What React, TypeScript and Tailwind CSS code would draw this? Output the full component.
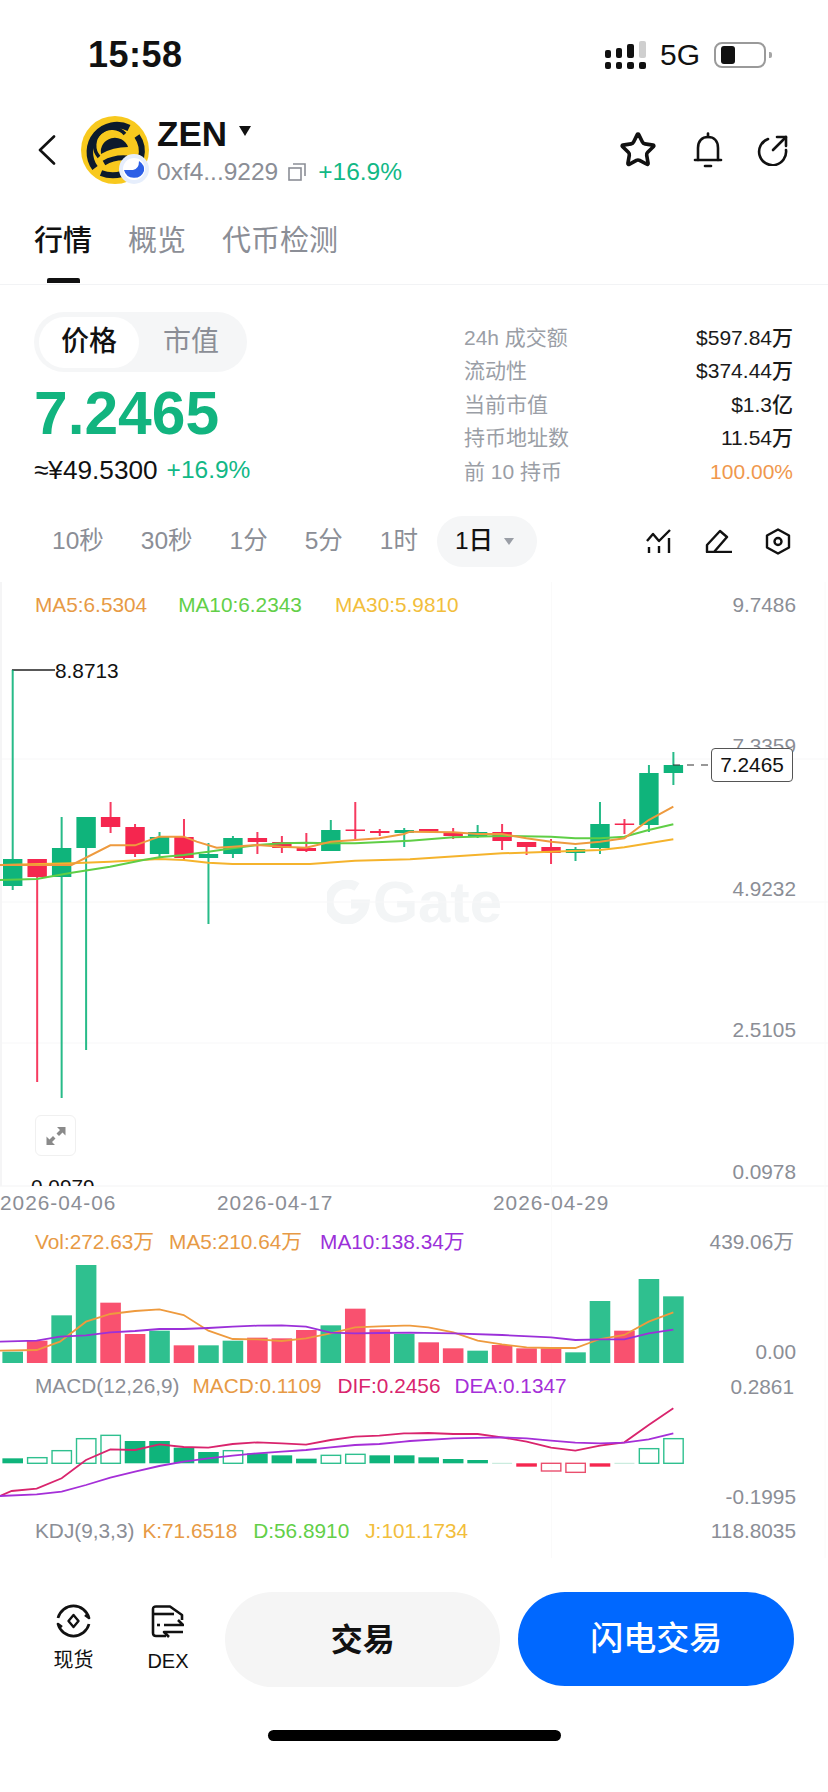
import { Star } from 'lucide-react';

type P = [number, number];

const GREEN = '#0fb47b';
const RED = '#f5264f';

// points read off the 3x crops, left half and right half of the chart
const pts = (oy: number, left: P[], right: P[]) =>
  [
    ...left.map(([u, v]) => `${u / 3},${oy + v / 3}`),
    ...right.map(([u, v]) => `${410 + u / 3},${oy + v / 3}`),
  ].join(' ');

const cx = (i: number) => 12.7 + 24.47 * i;

// high, body top, body bottom, low, up
const candles: [number, number, number, number, boolean][] = [
  [670, 859, 886, 890, true],
  [859, 859, 877, 1082, false],
  [817, 848, 877, 1098, true],
  [817, 817, 848, 1050, true],
  [802, 817, 827, 833, false],
  [824, 827, 854, 857, false],
  [832, 837, 854, 858, true],
  [819, 837, 858, 861, false],
  [843, 854, 858, 924, true],
  [836, 838, 854, 858, true],
  [832, 838, 842, 854, false],
  [836, 842, 848, 853, false],
  [833, 848, 851, 852, false],
  [820, 830, 851, 851, true],
  [802, 829.5, 831, 840, false],
  [829, 831, 833, 836, false],
  [828, 830, 833, 847, true],
  [829, 829, 832, 832, false],
  [828, 832, 836, 839, false],
  [825, 832, 836, 838, true],
  [824, 832, 841, 850, false],
  [842, 842, 847, 855, false],
  [839, 847, 853, 864, false],
  [847, 849, 853, 861, true],
  [802, 824, 848, 854, true],
  [819, 823.5, 825, 834, false],
  [765, 773, 825, 832, true],
  [752, 765, 773, 785, true],
];

const ma5 = pts(580, [[0, 855], [150, 855], [215, 855], [331, 796], [405, 796], [478, 770], [551, 770], [590, 785], [650, 803], [698, 800], [772, 795], [845, 800], [918, 803], [992, 785], [1065, 780], [1138, 775], [1212, 762]], [[0, 755], [130, 757], [202, 762], [276, 762], [349, 775], [423, 785], [496, 792], [570, 785], [643, 775], [716, 720], [790, 680]]);
const ma10 = pts(580, [[0, 900], [110, 897], [215, 878], [330, 860], [430, 840], [478, 832], [551, 825], [625, 815], [698, 805], [772, 795], [845, 790], [918, 788], [992, 790], [1065, 790], [1212, 783]], [[0, 782], [130, 772], [276, 768], [423, 770], [496, 775], [570, 775], [643, 770], [716, 750], [790, 733]]);
const ma30 = pts(580, [[0, 855], [215, 850], [330, 845], [478, 837], [551, 840], [625, 848], [698, 852], [930, 852], [1065, 842]], [[0, 838], [276, 820], [423, 815], [570, 810], [643, 802], [790, 778]]);

// volume bar tops, in crop units
const vols: [number, boolean][] = [
  [425, true], [392, false], [316, true], [165, true], [278, false], [372, false], [362, true],
  [406, false], [406, true], [392, true], [383, false], [385, false], [360, false], [346, true],
  [296, false], [358, false], [372, true], [397, false], [415, false], [422, true], [405, false],
  [415, false], [415, false], [427, true], [273, true], [362, false], [207, true], [259, true],
];
const volMa5 = pts(1210, [[0, 422], [110, 420], [180, 395], [258, 335], [331, 312], [405, 303], [478, 298], [551, 315], [625, 362], [698, 387], [772, 388], [845, 393], [918, 385], [992, 370], [1065, 352], [1138, 349], [1212, 347]], [[0, 347], [55, 352], [130, 367], [203, 392], [276, 403], [350, 412], [423, 414], [496, 414], [570, 387], [643, 375], [716, 335], [790, 307]]);
const volMa10 = pts(1210, [[0, 395], [110, 392], [180, 380], [258, 376], [331, 367], [405, 363], [478, 357], [551, 357], [625, 354], [698, 350], [772, 347], [845, 346], [918, 350], [992, 368], [1065, 370], [1138, 369]], [[0, 368], [130, 370], [276, 375], [423, 382], [496, 390], [570, 388], [643, 388], [716, 370], [790, 359]]);

// macd histogram: edge in crop units, f filled, o outlined, l hairline
const macd: [number, 'f' | 'o' | 'l'][] = [
  [745, 'f'], [743, 'o'], [722, 'o'], [686, 'o'], [676, 'o'], [693, 'f'], [693, 'f'], [713, 'f'],
  [726, 'f'], [722, 'o'], [730, 'f'], [736, 'f'], [746, 'f'], [736, 'o'], [733, 'o'], [736, 'f'],
  [736, 'f'], [742, 'f'], [747, 'f'], [750, 'f'], [760, 'l'], [770, 'f'], [783, 'o'], [787, 'o'],
  [770, 'f'], [760, 'l'], [716, 'o'], [686, 'o'],
];
const dif = pts(1210, [[0, 858], [35, 843], [110, 836], [185, 805], [258, 750], [331, 718], [405, 720], [478, 703], [551, 711], [625, 713], [698, 702], [772, 697], [845, 700], [918, 704], [992, 690], [1065, 680], [1138, 677], [1212, 670]], [[0, 670], [55, 669], [130, 672], [203, 672], [276, 682], [350, 695], [423, 713], [496, 722], [570, 707], [643, 697], [716, 645], [790, 595]]);
const dea = pts(1210, [[0, 858], [110, 853], [185, 845], [258, 825], [331, 803], [405, 785], [478, 768], [551, 755], [625, 745], [698, 737], [772, 730], [845, 725], [918, 720], [992, 712], [1065, 705], [1138, 702], [1212, 695]], [[0, 693], [130, 685], [276, 682], [350, 685], [423, 692], [496, 698], [570, 700], [643, 698], [716, 688], [790, 670]]);

const ChartDrawing = () => (
  <svg className="absolute inset-0" width="828" height="976" viewBox="0 582 828 976" fill="none">
    {[759, 902, 1043].map((y) => (
      <line key={y} x1="0" x2="828" y1={y} y2={y} stroke="#f7f7f8" strokeWidth="1" />
    ))}
    <line x1="0" x2="828" y1="1186" y2="1186" stroke="#f3f3f4" />
    <line x1="551.5" x2="551.5" y1="582" y2="1558" stroke="#fafafa" />
    <line x1="1" x2="1" y1="582" y2="1186" stroke="#f5f5f6" strokeWidth="2" />
    <line x1="825" x2="825" y1="582" y2="1558" stroke="#fafafa" />

    <polyline points="12.7,671 12.7,670 55,670" stroke="#222" strokeWidth="1.5" />
    {candles.map(([high, top, bottom, low, up], i) => (
      <g key={i} fill={up ? GREEN : RED}>
        <rect x={cx(i) - 1} y={high} width="2" height={low - high} opacity="0.9" />
        <rect x={cx(i) - 9.7} y={top} width="19.4" height={bottom - top} />
      </g>
    ))}
    <polyline points={ma30} stroke="#f5b32c" strokeWidth="2" />
    <polyline points={ma10} stroke="#5fce46" strokeWidth="2" />
    <polyline points={ma5} stroke="#ee9a3e" strokeWidth="2" />
    <line x1="673" x2="708" y1="765" y2="765" stroke="#333" strokeWidth="1.2" strokeDasharray="7 7" />

    {vols.map(([top, up], i) => (
      <rect key={i} x={cx(i) - 10.3} y={1210 + top / 3} width="20.6" height={1363 - (1210 + top / 3)} fill={up ? '#2fc08f' : '#f9516f'} />
    ))}
    <polyline points={volMa5} stroke="#ee9a3e" strokeWidth="1.8" />
    <polyline points={volMa10} stroke="#9b30d9" strokeWidth="1.8" />

    {macd.map(([edge, mode], i) => {
      const y = 1210 + edge / 3;
      const zero = 1463.3;
      const up = y <= zero;
      const top = Math.min(y, zero);
      const h = Math.abs(y - zero);
      const color = up ? '#2fc08f' : '#ea4f6e';
      if (mode === 'l') {
        return <line key={i} x1={cx(i) - 10} x2={cx(i) + 10} y1={zero} y2={zero} stroke="#bfe8d8" />;
      }
      if (mode === 'o') {
        return <rect key={i} x={cx(i) - 9.6} y={top} width="19.4" height={h} stroke={color} strokeWidth="1.4" fill="none" />;
      }
      return <rect key={i} x={cx(i) - 10.3} y={top} width="20.6" height={h} fill={up ? GREEN : RED} />;
    })}
    <polyline points={dif} stroke="#d9246d" strokeWidth="1.8" />
    <polyline points={dea} stroke="#a52fd8" strokeWidth="1.8" />
  </svg>
);

const ZenLogo = () => (
  <svg width="68" height="68" viewBox="0 0 68 68" fill="none" className="shrink-0">
    <circle cx="34" cy="34" r="34" fill="#f8c91e" />
    <path d="M48 12 A27 27 0 0 0 14 52" stroke="#0c1a2c" strokeWidth="6.5" />
    <path d="M56 20 A27 27 0 0 1 60 42" stroke="#0c1a2c" strokeWidth="6" />
    <path d="M20 57 Q30 61 41 58" stroke="#0c1a2c" strokeWidth="6" />
    <path d="M18 41 A16 16 0 0 1 44 18" stroke="#0c1a2c" strokeWidth="3.5" />
    <path d="M20 38 A14 14 0 0 1 47 31 Q32 31 20 38 Z" fill="#0c1a2c" />
    <path d="M23 47 Q33 41 46 42" stroke="#0c1a2c" strokeWidth="5" />
  </svg>
);

const ChainBadge = () => (
  <svg width="30" height="30" viewBox="0 0 30 30" className="absolute left-[38px] top-[38px]">
    <circle cx="15" cy="15" r="15" fill="#e6eefc" />
    <circle cx="15" cy="15" r="11" fill="#ffffff" />
    <path d="M5 16 H14 Q20 15 20 7 Q26 11 25 17 A10.5 10.5 0 0 1 5 16 Z" fill="#2c5fe6" />
  </svg>
);

const BellIcon = () => (
  <svg width="30" height="36" viewBox="0 0 30 36" fill="none" stroke="#111" strokeWidth="2.6" strokeLinecap="round" strokeLinejoin="round">
    <path d="M2 28 H28" />
    <path d="M5 28 V16 C5 9 9 5 15 5 C21 5 25 9 25 16 V28" />
    <path d="M15 1.5 V5" />
    <path d="M12 34 H18" />
  </svg>
);

const ShareIcon = () => (
  <svg width="31" height="31" viewBox="0 0 31 31" fill="none" stroke="#111" strokeWidth="2.6" strokeLinecap="round" strokeLinejoin="round">
    <path d="M11 4 A13.5 13.5 0 1 0 29 15" />
    <path d="M16 15 L29 2" />
    <path d="M20 2 H29 V11" />
  </svg>
);

const IndicatorIcon = () => (
  <svg width="26" height="24" viewBox="0 0 26 24" fill="none" stroke="#111" strokeWidth="2.4" strokeLinejoin="round">
    <polyline points="1,12 7,5 13,12 24,1" />
    <path d="M3 18 V24 M13 17 V24 M23 9 V24" />
  </svg>
);

const PenIcon = () => (
  <svg width="27" height="24" viewBox="0 0 27 24" fill="none" stroke="#111" strokeWidth="2.4" strokeLinejoin="round">
    <path d="M2 23 V16 L15 2 L22 8 L9 23 Z" />
    <path d="M9 23 H27" />
  </svg>
);

const HexIcon = () => (
  <svg width="26" height="27" viewBox="0 0 26 27" fill="none" stroke="#111" strokeWidth="2.4" strokeLinejoin="round">
    <path d="M13 1.5 L24 7.5 V19.5 L13 25.5 L2 19.5 V7.5 Z" />
    <circle cx="13" cy="13.5" r="3.5" />
  </svg>
);

const SpotIcon = () => (
  <svg width="37" height="36" viewBox="0 0 37 36" fill="none" stroke="#111" strokeWidth="2.7" strokeLinejoin="round">
    <path d="M3 15 A16 16 0 0 1 34 15 L30 12" />
    <path d="M34 21 A16 16 0 0 1 3 21 L7 24" />
    <path d="M18.5 12 L23.5 18 L18.5 24 L13.5 18 Z" strokeWidth="2.4" />
  </svg>
);

const DexIcon = () => (
  <svg width="33" height="34" viewBox="0 0 33 34" fill="none" stroke="#111" strokeWidth="2.6" strokeLinejoin="round">
    <path d="M15 31 H5 Q2 31 2 28 V4 Q2 1.5 5 1.5 H19 L31 10 V15" />
    <path d="M2 9 H23" />
    <path d="M13 20 H32 L27 15" />
    <path d="M32 27 H13 L18 32" />
    <path d="M6 20 H9" />
  </svg>
);

const ExpandIcon = () => (
  <svg width="20" height="20" viewBox="0 0 20 20" fill="#8a8a8a">
    <path d="M11 1 H19.5 V9.5 L16.5 6.5 L13 10 L10.5 7.5 L14 4 Z" />
    <path d="M9 19 H0.5 V10.5 L3.5 13.5 L7 10 L9.5 12.5 L6 16 Z" />
  </svg>
);

const stats = [
  ['24h 成交额', '$597.84万', 'text-[#1a1a1a]'],
  ['流动性', '$374.44万', 'text-[#1a1a1a]'],
  ['当前市值', '$1.3亿', 'text-[#1a1a1a]'],
  ['持币地址数', '11.54万', 'text-[#1a1a1a]'],
  ['前 10 持币', '100.00%', 'text-[#f0984d]'],
];

export default function App() {
  return (
    <div className="w-[828px] h-[1792px] overflow-hidden bg-white font-['Liberation_Sans','Noto_Sans_CJK_SC',sans-serif] text-[#111]">
      {/* status bar */}
      <div className="flex h-[110px] items-center pl-[88px] pr-[56px]">
        <span className="text-[36px] font-bold tracking-[0.5px]">15:58</span>
        <div className="ml-auto flex items-center">
          <svg width="41" height="28" viewBox="0 0 41 28" fill="#111">
            <rect x="0" y="9" width="6" height="8" rx="2" />
            <rect x="11" y="7" width="6" height="10" rx="2" />
            <rect x="22" y="3" width="7" height="14" rx="2" />
            <rect x="34" y="0" width="7" height="17" rx="2" fill="#cfcfcf" />
            <rect x="0" y="21" width="6" height="7" rx="2" />
            <rect x="11" y="21" width="6" height="7" rx="2" />
            <rect x="22" y="21" width="7" height="7" rx="2" />
            <rect x="34" y="21" width="7" height="7" rx="2" />
          </svg>
          <span className="ml-[14px] text-[30px] leading-none">5G</span>
          <div className="ml-[14px] flex h-[26px] w-[52px] items-center rounded-[8px] border-2 border-[#9a9a9a] pl-[5px]">
            <div className="h-[18px] w-[14px] rounded-[3px] bg-[#111]" />
          </div>
          <div className="ml-[3px] h-[6px] w-[3px] rounded-r-[2px] bg-[#a5a5a5]" />
        </div>
      </div>

      {/* token header */}
      <div className="flex h-[80px] items-center pl-[38px] pr-[40px]">
        <svg width="18" height="30" viewBox="0 0 18 30" fill="none" stroke="#111" strokeWidth="2.6" strokeLinecap="round" strokeLinejoin="round">
          <path d="M16 1.5 L2 15 L16 28.5" />
        </svg>
        <div className="relative ml-[25px] h-[68px] w-[68px]">
          <ZenLogo />
          <ChainBadge />
        </div>
        <div className="ml-[8px] flex flex-col">
          <div className="flex h-[36px] items-center">
            <span className="text-[35px] font-bold leading-[36px]">ZEN</span>
            <span className="ml-[12px] mt-[-5px] h-0 w-0 border-x-[6.5px] border-t-[10px] border-x-transparent border-t-[#111]" />
          </div>
          <div className="mt-[7px] flex items-center">
            <span className="text-[24.5px] leading-[26px] text-[#8b8e96]">0xf4...9229</span>
            <svg className="ml-[10px]" width="18" height="18" viewBox="0 0 18 18" fill="none" stroke="#8b8e96" strokeWidth="1.6">
              <rect x="1" y="5" width="12" height="12" />
              <path d="M5 1 H17 V13" />
            </svg>
            <span className="ml-[12px] text-[24.5px] font-medium leading-[26px] text-[#12b886]">+16.9%</span>
          </div>
        </div>
        <div className="ml-auto flex items-center gap-[34px]">
          <div className="mr-[2px]">
            <Star size={38} strokeWidth={2.3} color="#111" strokeLinejoin="miter" />
          </div>
          <BellIcon />
          <ShareIcon />
        </div>
      </div>

      {/* tabs */}
      <div className="flex h-[95px] gap-[36px] border-b border-[#f2f3f5] pl-[34px]">
        <div className="flex flex-col items-center pt-[34px]">
          <span className="text-[29px] font-medium leading-[34px]">行情</span>
          <div className="mt-[20px] h-[5px] w-[33px] rounded-t-[2px] bg-[#111]" />
        </div>
        <span className="pt-[34px] text-[29px] leading-[34px] text-[#8b8e96]">概览</span>
        <span className="pt-[34px] text-[29px] leading-[34px] text-[#8b8e96]">代币检测</span>
      </div>

      {/* price summary */}
      <div className="flex h-[220px] justify-between pl-[34px] pr-[35px] pt-[27px]">
        <div className="flex flex-col">
          <div className="flex h-[60px] w-[213px] items-center rounded-full bg-[#f5f6f7] pl-[5px]">
            <div className="flex h-[51px] w-[100px] items-center justify-center rounded-full bg-white text-[28px] font-medium">价格</div>
            <div className="ml-[24px] text-[28px] text-[#8b8e96]">市值</div>
          </div>
          <div className="mt-[8px] text-[60.5px] font-bold leading-[66px] text-[#12b47f]">7.2465</div>
          <div className="mt-[11px] flex items-center text-[26.2px] leading-[26px]">
            <span>≈¥49.5300</span>
            <span className="ml-[9px] text-[24.5px] text-[#12b886]">+16.9%</span>
          </div>
        </div>
        <div className="flex w-[329px] flex-col pt-[9px]">
          {stats.map(([label, value, color]) => (
            <div key={label} className="flex h-[33.4px] items-center justify-between">
              <span className="text-[21px] text-[#9a9ea6]">{label}</span>
              <span className={`text-[21px] font-medium ${color}`}>{value}</span>
            </div>
          ))}
        </div>
      </div>

      {/* timeframes */}
      <div className="mb-[5px] flex h-[72px] items-center pl-[52px] pr-[37px]">
        <div className="flex items-center gap-[37px] text-[24.5px] text-[#8b8e96]">
          <span>10秒</span>
          <span>30秒</span>
          <span>1分</span>
          <span>5分</span>
          <span>1时</span>
        </div>
        <div className="ml-[19px] flex h-[51px] w-[100px] items-center rounded-full bg-[#f5f6f7] pl-[18px]">
          <span className="text-[24.5px] font-medium">1日</span>
          <span className="ml-[11px] h-0 w-0 border-x-[5.5px] border-t-[7px] border-x-transparent border-t-[#9a9ea6]" />
        </div>
        <div className="ml-auto flex items-center gap-[33px]">
          <IndicatorIcon />
          <PenIcon />
          <HexIcon />
        </div>
      </div>

      {/* chart canvas */}
      <div className="relative h-[976px] w-[828px] overflow-hidden text-[20.8px] leading-[24px]">
        <div className="absolute left-[327px] top-[292px] flex items-center text-[#f3f5f6]">
          <svg width="44" height="44" viewBox="0 0 44 44" fill="none" stroke="#f3f5f6" strokeWidth="9">
            <path d="M30 7 A18 18 0 1 0 38 24 L24 24" />
          </svg>
          <span className="ml-[2px] text-[58px] font-bold leading-[56px]">Gate</span>
        </div>

        <ChartDrawing />

        <div className="absolute left-[35px] top-[11px] flex">
          <span className="text-[#e79a45]">MA5:6.5304</span>
          <span className="ml-[31px] text-[#62cf48]">MA10:6.2343</span>
          <span className="ml-[33px] text-[#f2be3c]">MA30:5.9810</span>
        </div>
        <div className="absolute left-[55px] top-[77px] text-[#111]">8.8713</div>

        <div className="absolute right-[32px] top-[11px] text-[#8b8e96]">9.7486</div>
        <div className="absolute right-[32px] top-[152px] text-[#8b8e96]">7.3359</div>
        <div className="absolute right-[32px] top-[295px] text-[#8b8e96]">4.9232</div>
        <div className="absolute right-[32px] top-[436px] text-[#8b8e96]">2.5105</div>
        <div className="absolute right-[32px] top-[578px] text-[#8b8e96]">0.0978</div>

        <div className="absolute left-[711px] top-[166px] flex h-[34px] w-[82px] items-center justify-center rounded-[4px] border border-[#555] bg-white text-[#111]">7.2465</div>

        <div className="absolute left-[35px] top-[533px] flex h-[41px] w-[41px] items-center justify-center rounded-[6px] border border-[#f0f0f0] bg-white">
          <ExpandIcon />
        </div>
        <div className="absolute left-[31px] top-[577px] h-[27px] overflow-hidden leading-[55px] text-[#111]">0.0979</div>

        <div className="absolute left-0 top-[609px] tracking-[1px] text-[#8b8e96]">2026-04-06</div>
        <div className="absolute left-[217px] top-[609px] tracking-[1px] text-[#8b8e96]">2026-04-17</div>
        <div className="absolute left-[493px] top-[609px] tracking-[1px] text-[#8b8e96]">2026-04-29</div>

        <div className="absolute left-[35px] top-[648px] flex">
          <span className="text-[#e79a45]">Vol:272.63万</span>
          <span className="ml-[15px] text-[#e79a45]">MA5:210.64万</span>
          <span className="ml-[18px] text-[#9b30d9]">MA10:138.34万</span>
        </div>
        <div className="absolute right-[34px] top-[648px] text-[#8b8e96]">439.06万</div>
        <div className="absolute right-[32px] top-[758px] text-[#8b8e96]">0.00</div>

        <div className="absolute left-[35px] top-[792px] flex">
          <span className="text-[#8b8e96]">MACD(12,26,9)</span>
          <span className="ml-[13px] text-[#e79a45]">MACD:0.1109</span>
          <span className="ml-[16px] text-[#d9246d]">DIF:0.2456</span>
          <span className="ml-[14px] text-[#a52fd8]">DEA:0.1347</span>
        </div>
        <div className="absolute right-[34px] top-[793px] text-[#8b8e96]">0.2861</div>
        <div className="absolute right-[32px] top-[903px] text-[#8b8e96]">-0.1995</div>

        <div className="absolute left-[35px] top-[937px] flex">
          <span className="text-[#8b8e96]">KDJ(9,3,3)</span>
          <span className="ml-[8px] text-[#e79a45]">K:71.6518</span>
          <span className="ml-[16px] text-[#62cf48]">D:56.8910</span>
          <span className="ml-[16px] text-[#f2be3c]">J:101.1734</span>
        </div>
        <div className="absolute right-[32px] top-[937px] text-[#8b8e96]">118.8035</div>
      </div>

      {/* bottom actions */}
      <div className="flex h-[129px] items-start pl-[53px] pr-[34px] pt-[34px]">
        <div className="flex w-[41px] flex-col items-center pt-[11px]">
          <SpotIcon />
          <span className="mt-[9px] whitespace-nowrap text-[20px] leading-[24px]">现货</span>
        </div>
        <div className="ml-[55px] flex w-[38px] flex-col items-center pt-[13px]">
          <DexIcon />
          <span className="mt-[10px] text-[20px] leading-[24px]">DEX</span>
        </div>
        <button className="ml-[38px] flex h-[95px] w-[276px] items-center justify-center rounded-full bg-[#f5f5f5] text-[32px] font-bold">交易</button>
        <button className="ml-[18px] flex h-[94px] w-[276px] items-center justify-center rounded-full bg-[#0068ff] text-[33px] font-medium text-white">闪电交易</button>
      </div>

      {/* home indicator */}
      <div className="mt-[43px] flex justify-center">
        <div className="h-[11px] w-[293px] rounded-full bg-black" />
      </div>
    </div>
  );
}
